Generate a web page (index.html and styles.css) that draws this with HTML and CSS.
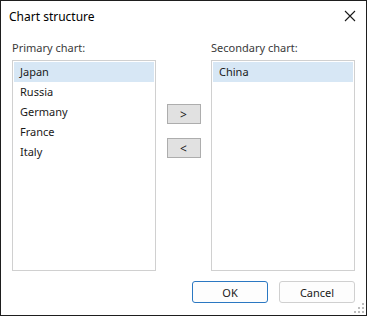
FILE: index.html
```html
<!DOCTYPE html>
<html lang="en">
<head>
  <meta charset="UTF-8" />
  <title>Chart structure</title>
  <link rel="stylesheet" href="styles.css">
</head>
<body>

<div class="window">
  <div class="titlebar">
    <span class="title">Chart structure</span>
    <svg class="close" width="12" height="12" viewBox="0 0 12 12">
      <path d="M1 1 L11 11 M11 1 L1 11" stroke="#1a1a1a" stroke-width="1.1" fill="none"/>
    </svg>
  </div>

  <div class="content">
    <div class="columns">
      <div class="col">
        <div class="label">Primary chart:</div>
        <div class="list">
          <div class="item selected">Japan</div>
          <div class="item">Russia</div>
          <div class="item">Germany</div>
          <div class="item">France</div>
          <div class="item">Italy</div>
        </div>
      </div>

      <div class="middle">
        <button class="move">&gt;</button>
        <button class="move">&lt;</button>
      </div>

      <div class="col">
        <div class="label">Secondary chart:</div>
        <div class="list">
          <div class="item selected">China</div>
        </div>
      </div>
    </div>

    <div class="footer">
      <button class="btn default">OK</button>
      <button class="btn">Cancel</button>
    </div>
  </div>

  <!-- уголок для ресайза -->
  <svg class="grip" width="10" height="10" viewBox="0 0 10 10">
    <rect x="8" y="0" width="2" height="2" fill="#bdbdbd"/>
    <rect x="4" y="4" width="2" height="2" fill="#bdbdbd"/>
    <rect x="8" y="4" width="2" height="2" fill="#bdbdbd"/>
    <rect x="0" y="8" width="2" height="2" fill="#bdbdbd"/>
    <rect x="4" y="8" width="2" height="2" fill="#bdbdbd"/>
    <rect x="8" y="8" width="2" height="2" fill="#bdbdbd"/>
  </svg>
</div>

</body>
</html>
```

FILE: styles.css
```css
body {
  margin: 0;
  font-family: "Noto Sans", "Open Sans", sans-serif;
  font-size: 11px;
  color: #1a1a1a;
  background: white;
}

.window {
  position: relative;
  width: 367px;
  height: 316px;
  box-sizing: border-box;
  border: 1px solid #1e1e1e;
  background: white;
  display: flex;
  flex-direction: column;
}

.titlebar {
  height: 30px;
  display: flex;
  align-items: center;
  justify-content: space-between;
  padding: 0 10px 0 8px;
}

.title {
  font-size: 12px;
  color: #000;
}

.close {
  display: block;
}

.content {
  flex: 1;
  display: flex;
  flex-direction: column;
  padding: 9px 11px 0 11px;
}

.columns {
  display: flex;
}

.col {
  width: 144px;
  display: flex;
  flex-direction: column;
}

.label {
  height: 16px;
  line-height: 16px;
  color: #3a3a3a;
  margin-bottom: 4px;
}

.list {
  height: 211px;
  box-sizing: border-box;
  border: 1px solid #d0d0d0;
  padding: 1px;
}

.item {
  height: 20px;
  line-height: 20px;
  padding-left: 6px;
}

.item.selected {
  background: #d7e7f5;
}

.middle {
  width: 55px;
  display: flex;
  flex-direction: column;
  align-items: center;
  gap: 14px;
  padding-top: 64px;
}

.move {
  width: 34px;
  height: 20px;
  padding: 0;
  background: #e1e1e1;
  border: 1px solid #adadad;
  font-family: inherit;
  font-size: 12px;
  color: #1a1a1a;
}

.footer {
  display: flex;
  justify-content: flex-end;
  gap: 11px;
  margin-top: 10px;
}

.btn {
  width: 76px;
  height: 22px;
  padding: 0;
  background: #fdfdfd;
  border: 1px solid #d0d0d0;
  border-radius: 3px;
  font-family: inherit;
  font-size: 11px;
  color: #1a1a1a;
}

.btn.default {
  border-color: #2b78c2;
}

.grip {
  position: absolute;
  right: 2px;
  bottom: 2px;
}
```
